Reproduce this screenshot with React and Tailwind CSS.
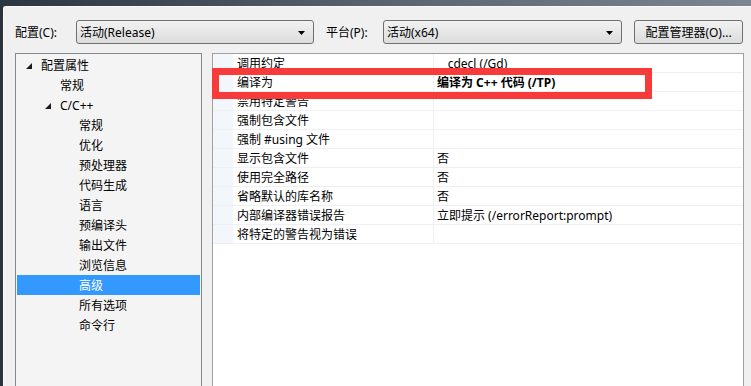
import React from 'react';

const font = { fontFamily: '"Noto Sans", "Noto Sans CJK SC", sans-serif' };

const treeItems = [
  { label: '配置属性', pad: 'pl-[9px]', open: true },
  { label: '常规', pad: 'pl-[43px]' },
  { label: 'C/C++', pad: 'pl-[28px]', open: true },
  { label: '常规', pad: 'pl-[62px]' },
  { label: '优化', pad: 'pl-[62px]' },
  { label: '预处理器', pad: 'pl-[62px]' },
  { label: '代码生成', pad: 'pl-[62px]' },
  { label: '语言', pad: 'pl-[62px]' },
  { label: '预编译头', pad: 'pl-[62px]' },
  { label: '输出文件', pad: 'pl-[62px]' },
  { label: '浏览信息', pad: 'pl-[62px]' },
  { label: '高级', pad: 'pl-[62px]', selected: true },
  { label: '所有选项', pad: 'pl-[62px]' },
  { label: '命令行', pad: 'pl-[62px]' },
];

const props = [
  ['调用约定', '__cdecl (/Gd)'],
  ['编译为', '编译为 C++ 代码 (/TP)', true],
  ['禁用特定警告', ''],
  ['强制包含文件', ''],
  ['强制 #using 文件', ''],
  ['显示包含文件', '否'],
  ['使用完全路径', '否'],
  ['省略默认的库名称', '否'],
  ['内部编译器错误报告', '立即提示 (/errorReport:prompt)'],
  ['将特定的警告视为错误', ''],
];

const Arrow = () => (
  <svg width="6" height="6" viewBox="0 0 6 6" className="mr-[9px] shrink-0">
    <polygon points="6,0 6,6 0,6" fill="#1a1a1a" />
  </svg>
);

const Combo = ({ text, width }) => (
  <div
    className={`${width} h-[24px] flex items-center justify-between pl-[3px] pr-[8px] pt-px border border-[#707070] rounded-[3px] bg-gradient-to-b from-[#f2f2f2] to-[#dcdcdc] text-[12px] text-black`}
  >
    <span>{text}</span>
    <svg width="7" height="4" viewBox="0 0 7 4">
      <polygon points="0,0 7,0 3.5,4" fill="#000" />
    </svg>
  </div>
);

export default function App() {
  return (
    <div className="w-[751px] h-[386px] overflow-hidden flex flex-col bg-[#2f3a46]" style={font}>
      <div className="h-[6px] shrink-0 bg-gradient-to-r from-[#2b3642] via-[#59636e] to-[#7c8590]" />
      <div className="flex flex-1 min-h-0">
        <div className="w-[3px] shrink-0 bg-[#2a323c]" />
        <div className="flex-1 flex flex-col bg-[#f0f0f0] border-t border-l border-[#fafafa] rounded-tl-[3px] pl-[11px] pt-[13px]">
          <div className="flex items-center h-[24px] text-[12px] text-black">
            <span className="w-[61px] pt-[2px]">配置(C):</span>
            <Combo text="活动(Release)" width="w-[238px]" />
            <span className="ml-[12px] w-[57px] pt-[2px]">平台(P):</span>
            <Combo text="活动(x64)" width="w-[239px]" />
            <button className="ml-[12px] w-[109px] h-[24px] pt-px border border-[#707070] rounded-[3px] bg-gradient-to-b from-[#f2f2f2] to-[#dcdcdc] text-[12px] text-black">
              配置管理器(O)...
            </button>
          </div>
          <div className="flex flex-1 min-h-0 mt-[9px]">
            <div className="w-[187px] shrink-0 border border-b-0 border-[#828790] bg-[#f4f4f4] pt-px px-px">
              {treeItems.map((it, i) => (
                <div
                  key={i}
                  className={`h-[20px] flex items-center pt-px text-[12px] ${it.pad} ${
                    it.selected ? 'bg-[#3399ff] text-white' : 'text-black'
                  }`}
                >
                  {it.open && <Arrow />}
                  <span>{it.label}</span>
                </div>
              ))}
            </div>
            <div className="ml-[10px] w-[532px] shrink-0 border border-b-0 border-[#a0a0a0] bg-white relative">
              {props.map(([name, value, bold], i) => (
                <div key={i} className="flex h-[19px] text-[12px] text-black border-b border-[#eef0f4]">
                  <div className="w-[20px] shrink-0 bg-[#f3f6fb]" />
                  <div className="w-[201px] shrink-0 pl-[4px] pt-px flex items-center border-r border-[#eef0f4]">{name}</div>
                  <div className={`flex-1 pl-[3px] pt-px flex items-center ${bold ? 'font-bold' : ''}`}>{value}</div>
                </div>
              ))}
              <div className="absolute left-[-1px] top-[14px] w-[440px] h-[31px] border-[7px] border-[#f93a3a]" />
            </div>
          </div>
        </div>
      </div>
    </div>
  );
}
